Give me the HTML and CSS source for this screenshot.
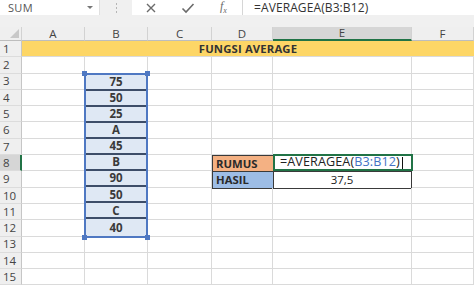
FILE: index.html
```html
<!DOCTYPE html>
<html>
<head>
<meta charset="utf-8">
<link rel="stylesheet" href="styles.css">
</head>
<body>
<div class="app">
  <div class="toolbar">
    <div class="namebox"><span class="nb-text">SUM</span><span class="caret"></span></div>
    <div class="grip"><span></span><span></span><span></span></div>
    <div class="fxbox">
      <div class="btns">
        <svg class="ico" width="12" height="12" viewBox="0 0 12 12"><path d="M2 2 L10 10 M10 2 L2 10" stroke="#6b6b6b" stroke-width="1.4" fill="none"/></svg>
        <svg class="ico" width="14" height="12" viewBox="0 0 14 12"><path d="M1.5 6.5 L5 10 L12.5 2" stroke="#6b6b6b" stroke-width="1.6" fill="none"/></svg>
        <span class="fx">f<sub>x</sub></span>
      </div>
      <div class="formula">=AVERAGEA(B3:B12)</div>
    </div>
  </div>
  <div class="sheet">
    <div class="hd corner"><span class="tri"></span></div>
    <div class="hd">A</div>
    <div class="hd">B</div>
    <div class="hd">C</div>
    <div class="hd">D</div>
    <div class="hd sel-col">E</div>
    <div class="hd">F</div>

    <div class="rn">1</div><div class="title">FUNGSI AVERAGE</div>

    <div class="rn">2</div><div class="c"></div><div class="c"></div><div class="c"></div><div class="c"></div><div class="c"></div><div class="c"></div>

    <div class="brange">
      <div class="bv">75</div><div class="bv">50</div><div class="bv">25</div><div class="bv">A</div><div class="bv">45</div>
      <div class="bv">B</div><div class="bv">90</div><div class="bv">50</div><div class="bv">C</div><div class="bv last">40</div>
      <span class="h tl"></span><span class="h tr"></span><span class="h bl"></span><span class="h br"></span>
    </div>

    <div class="rn">3</div><div class="c"></div><div class="c"></div><div class="c"></div><div class="c"></div><div class="c"></div>
    <div class="rn">4</div><div class="c"></div><div class="c"></div><div class="c"></div><div class="c"></div><div class="c"></div>
    <div class="rn">5</div><div class="c"></div><div class="c"></div><div class="c"></div><div class="c"></div><div class="c"></div>
    <div class="rn">6</div><div class="c"></div><div class="c"></div><div class="c"></div><div class="c"></div><div class="c"></div>
    <div class="rn">7</div><div class="c"></div><div class="c"></div><div class="c nb"></div><div class="c nb"></div><div class="c"></div>
    <div class="rn sel-row">8</div><div class="c"></div><div class="c"></div><div class="lbl rumus">RUMUS</div><div class="edit">=AVERAGEA(<span class="ref">B3:B12</span>)<span class="cursor"></span></div><div class="c"></div>
    <div class="rn">9</div><div class="c"></div><div class="c"></div><div class="lbl hasil">HASIL</div><div class="val">37,5</div><div class="c"></div>
    <div class="rn">10</div><div class="c"></div><div class="c"></div><div class="c"></div><div class="c"></div><div class="c"></div>
    <div class="rn">11</div><div class="c"></div><div class="c"></div><div class="c"></div><div class="c"></div><div class="c"></div>
    <div class="rn">12</div><div class="c"></div><div class="c"></div><div class="c"></div><div class="c"></div><div class="c"></div>
    <div class="rn">13</div><div class="c"></div><div class="c"></div><div class="c"></div><div class="c"></div><div class="c"></div><div class="c"></div>
    <div class="rn">14</div><div class="c"></div><div class="c"></div><div class="c"></div><div class="c"></div><div class="c"></div><div class="c"></div>
    <div class="rn">15</div><div class="c"></div><div class="c"></div><div class="c"></div><div class="c"></div><div class="c"></div><div class="c"></div>
  </div>
</div>
</body>
</html>
```
FILE: styles.css
```css
* { box-sizing: border-box; }
html, body { margin: 0; padding: 0; }
body {
  width: 474px;
  height: 285px;
  overflow: hidden;
  background: #ffffff;
  font-family: "Open Sans", "Noto Sans", sans-serif;
  color: #333;
  line-height: 1;
}
.app { width: 474px; height: 285px; overflow: hidden; background: #f0f0f0; }

.toolbar {
  height: 27px;
  display: flex;
  align-items: flex-start;
  background: #f0f0f0;
}
.namebox {
  width: 100px;
  height: 15px;
  background: #fff;
  display: flex;
  align-items: center;
  justify-content: space-between;
  padding: 0 6px 0 8px;
  border-right: 1px solid #e0e0e0;
}
.nb-text { font-size: 11px; color: #555; letter-spacing: 0.3px; }
.caret {
  width: 0; height: 0;
  border-left: 3px solid transparent;
  border-right: 3px solid transparent;
  border-top: 3px solid #777;
}
.grip {
  width: 32px;
  height: 15px;
  display: flex;
  flex-direction: column;
  align-items: center;
  justify-content: center;
  gap: 2px;
}
.grip span { width: 1px; height: 2px; background: #b5b5b5; }
.fxbox {
  flex: 1;
  height: 15px;
  background: #fff;
  display: flex;
  align-items: center;
}
.btns {
  width: 111px;
  height: 15px;
  display: flex;
  align-items: center;
  padding-left: 13px;
  gap: 24px;
  border-right: 1px solid #d6d6d6;
}
.ico { display: block; }
.fx {
  font-family: "Liberation Serif", serif;
  font-style: italic;
  font-size: 12px;
  color: #6b6b6b;
  margin-left: 1px;
}
.fx sub { font-size: 8px; }
.formula {
  padding-left: 11px;
  font-size: 12px;
  color: #333;
  letter-spacing: 0.1px;
}

.sheet {
  display: grid;
  grid-template-columns: 22px 63px 63px 64px 61px 139px 62px;
  grid-template-rows: 14px repeat(15, 16.3px);
  background: #fff;
}
.hd {
  background: #efefef;
  border-right: 1px solid #d2d2d2;
  border-bottom: 1px solid #bdbdbd;
  font-size: 11.5px;
  color: #444;
  display: flex;
  align-items: center;
  justify-content: center;
}
.corner { position: relative; }
.tri {
  position: absolute;
  right: 2px; bottom: 2px;
  width: 0; height: 0;
  border-left: 9px solid transparent;
  border-bottom: 9px solid #c8c8c8;
}
.sel-col {
  background: #d6d6d6;
  border-bottom: 2px solid #217346;
}
.rn {
  background: #efefef;
  border-right: 1px solid #c6c6c6;
  border-bottom: 1px solid #dcdcdc;
  font-size: 11.5px;
  color: #444;
  display: flex;
  align-items: center;
  padding-left: 3px;
}
.sel-row {
  background: #d6d6d6;
  border-right: 2px solid #217346;
}
.c {
  border-right: 1px solid #dadada;
  border-bottom: 1px solid #dadada;
}
.title {
  grid-column: span 6;
  background: #fdd666;
  border-bottom: 1px solid #dadada;
  font-weight: 700;
  font-size: 11.3px;
  color: #333;
  display: flex;
  align-items: center;
  justify-content: center;
  letter-spacing: 0.15px;
}

.brange {
  grid-column: 3;
  grid-row: 4 / 14;
  position: relative;
  background: #dfe8f4;
  border: 2px solid #4f78c2;
  margin: -1px 0 -1px -1px;
  display: grid;
  grid-template-rows: repeat(10, minmax(0, 1fr));
}
.bv {
  border-bottom: 2px solid #3d4d68;
  font-weight: 700;
  font-size: 11.5px;
  color: #3a3a3a;
  display: flex;
  align-items: center;
  justify-content: center;
  min-height: 0;
  overflow: hidden;
}
.bv.last { border-bottom: none; }
.h {
  position: absolute;
  width: 5px; height: 5px;
  background: #4f78c2;
}
.tl { left: -4px; top: -4px; }
.tr { right: -4px; top: -4px; }
.bl { left: -4px; bottom: -4px; }
.br { right: -4px; bottom: -4px; }

.lbl {
  border: 1px solid #3a3a3a;
  font-weight: 700;
  font-size: 11.3px;
  color: #2a2a2a;
  display: flex;
  align-items: center;
  padding-left: 3px;
  margin: 0 -1px -1px 0;
}
.rumus { background: #f4b183; }
.hasil { background: #9dbde6; }
.edit {
  border: 2px solid #217346;
  font-size: 12.6px;
  color: #222;
  display: flex;
  align-items: center;
  padding-left: 5px;
  letter-spacing: 0.1px;
  margin: -1px -1px 0 0;
  position: relative;
  z-index: 1;
}
.ref { color: #4472c4; }
.cursor { width: 1px; height: 12px; background: #111; margin-left: 2px; }
.val {
  border: 1px solid #3a3a3a;
  border-left: none;
  font-size: 11.5px;
  color: #222;
  display: flex;
  align-items: center;
  justify-content: center;
  margin-bottom: -1px;
}
```
